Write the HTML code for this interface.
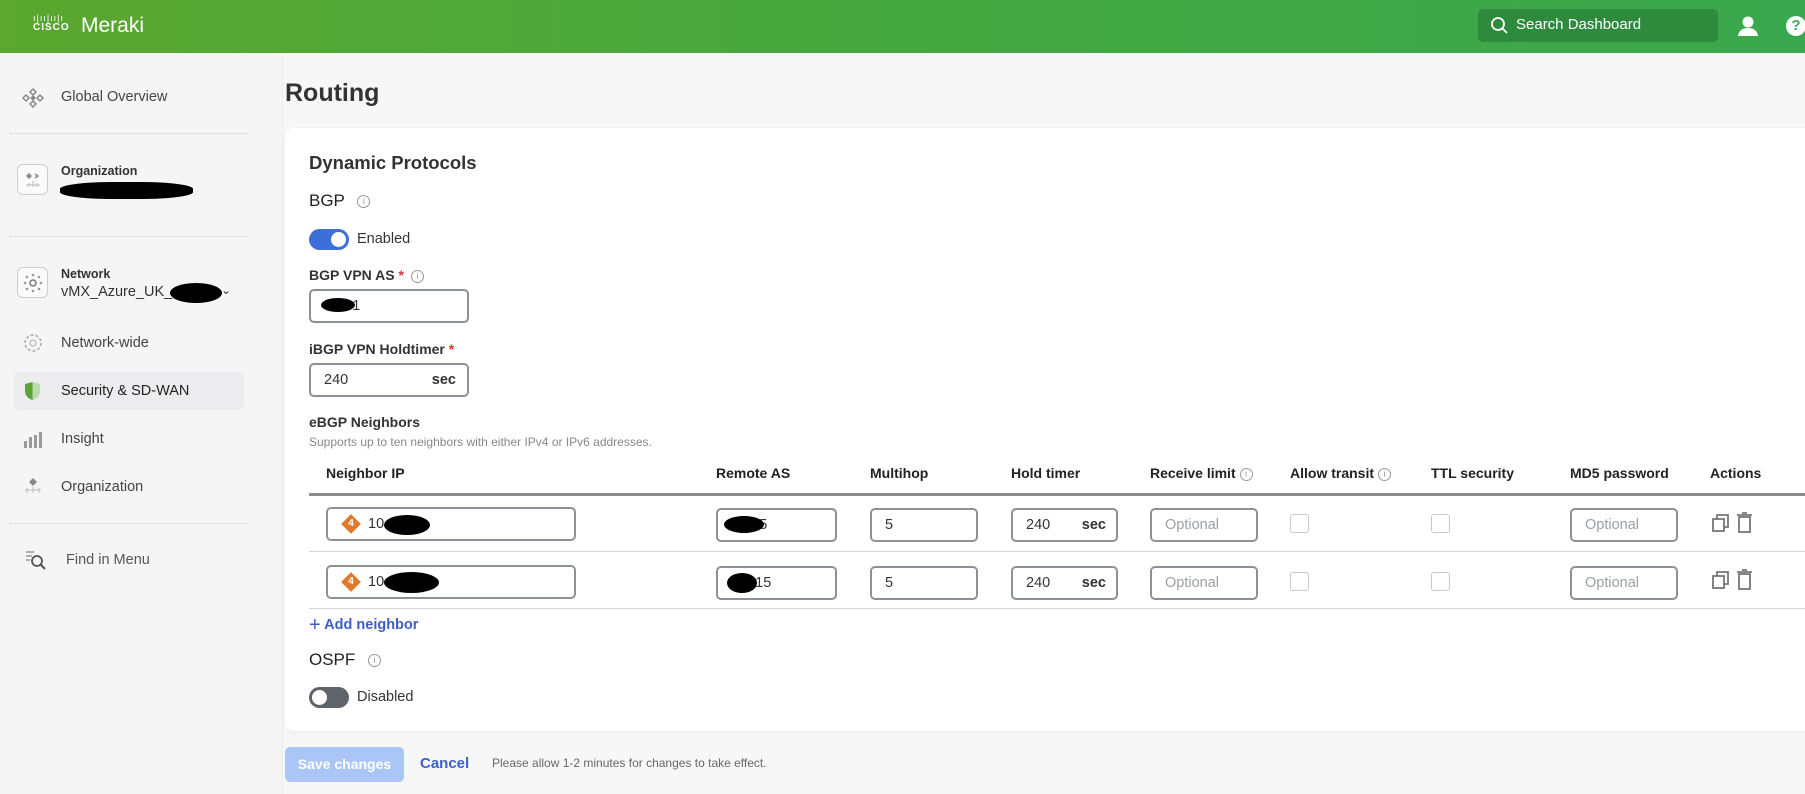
<!DOCTYPE html>
<html><head><meta charset="utf-8"><style>
*{box-sizing:border-box;margin:0;padding:0}
body{width:1805px;height:794px;overflow:hidden;background:#f7f7f7;font-family:"Liberation Sans",sans-serif;color:#222;position:relative}
.a{position:absolute;white-space:nowrap}
.hdr{position:absolute;left:0;top:0;width:1805px;height:53px;background:linear-gradient(90deg,#5ba72f,#45a840 50%,#3aa84e)}
.inp{position:absolute;height:34px;border:2px solid #8d9196;border-radius:5px;background:#fff;font-size:14.5px;color:#333;padding:0 13px;line-height:30px}
.ph{color:#9aa0a6}
.th{position:absolute;top:465px;font-size:14px;font-weight:bold;color:#222}
.cb{position:absolute;width:19px;height:19px;border:1.5px solid #c5c8cc;border-radius:3px;background:#fff}
.blob{position:absolute;background:#000;border-radius:50%}
.side{font-size:14.5px;color:#444}
.info{display:inline-block;width:13px;height:13px;border:1px solid #999;border-radius:50%;font-size:9px;line-height:11px;text-align:center;color:#999;font-weight:normal;vertical-align:middle}
.dia{display:inline-block;position:relative;width:14px;height:14px;background:#e07b2e;transform:rotate(45deg);vertical-align:middle;margin:0 10px 0 3px}
.dia b{position:absolute;left:0;top:0;width:14px;height:14px;transform:rotate(-45deg);color:#fff;font-size:10px;line-height:14px;text-align:center}
</style></head><body>
<div class="hdr"></div>
<div class="a" style="left:33px;top:14px;color:#fff;font-size:9px;letter-spacing:1px;line-height:9px">ı|ıı|ıı|ı<br><b style="font-size:10px">CISCO</b></div>
<div class="a" style="left:81px;top:14px;color:#fff;font-size:21px;font-weight:300">Meraki</div>
<div class="a" style="left:1478px;top:9px;width:240px;height:33px;background:#2e8b3e;border-radius:5px"></div>
<svg class="a" style="left:1490px;top:16px" width="20" height="20" viewBox="0 0 20 20"><circle cx="8" cy="8" r="6" fill="none" stroke="#fff" stroke-width="1.8"/><path d="M12.5 12.5L17 17" stroke="#fff" stroke-width="1.8"/></svg>
<div class="a" style="left:1516px;top:16px;color:#fff;font-size:15px">Search Dashboard</div>
<svg class="a" style="left:1737px;top:15px" width="22" height="22" viewBox="0 0 22 22"><circle cx="11" cy="7" r="5.5" fill="#fff"/><path d="M1 21c1-6 5-8 10-8s9 2 10 8z" fill="#fff"/></svg>
<div class="a" style="left:1786px;top:16px;width:20px;height:20px;background:#fff;border-radius:50%;color:#3aa84e;font-weight:bold;font-size:15px;text-align:center;line-height:20px">?</div>

<div class="a" style="left:0;top:53px;width:283px;height:741px;background:#f5f5f5;border-right:1px solid #ececec"></div>
<svg class="a" style="left:22px;top:87px" width="22" height="22" viewBox="0 0 22 22" fill="#888"><path d="M11 2l3 3-3 3-3-3z M4 8l3 3-3 3-3-3z M18 8l3 3-3 3-3-3z M11 14l3 3-3 3-3-3z" fill="none" stroke="#888" stroke-width="1.5"/><rect x="9" y="9" width="4" height="4" transform="rotate(45 11 11)"/></svg>
<div class="a side" style="left:61px;top:89px">Global Overview</div>
<div class="a" style="left:9px;top:133px;width:240px;height:1px;background:#ddd"></div>
<div class="a" style="left:17px;top:164px;width:31px;height:31px;border:1.5px solid #ccc;border-radius:6px;background:#fafafa"></div>
<svg class="a" style="left:23px;top:170px" width="20" height="20" viewBox="0 0 20 20"><path d="M6 3l3 3-3 3-3-3z" fill="#888"/><path d="M12 4l3 2-3 2" fill="none" stroke="#888" stroke-width="1.5"/><path d="M3 15h14M6 13v4M10 11v6M14 13v4" stroke="#bbb" stroke-width="1"/></svg>
<div class="a" style="left:61px;top:164px;font-size:12.5px;font-weight:bold;color:#333">Organization</div>
<div class="blob" style="left:60px;top:182px;width:133px;height:17px;border-radius:40%"></div>
<div class="a" style="left:9px;top:236px;width:240px;height:1px;background:#ddd"></div>
<div class="a" style="left:17px;top:267px;width:31px;height:31px;border:1.5px solid #ccc;border-radius:6px;background:#fafafa"></div>
<svg class="a" style="left:22px;top:272px" width="22" height="22" viewBox="0 0 22 22"><circle cx="11" cy="11" r="3" fill="none" stroke="#777" stroke-width="1.5"/><g fill="#999"><circle cx="11" cy="3" r="1.3"/><circle cx="11" cy="19" r="1.3"/><circle cx="3" cy="11" r="1.3"/><circle cx="19" cy="11" r="1.3"/><circle cx="5" cy="5" r="1.3"/><circle cx="17" cy="5" r="1.3"/><circle cx="5" cy="17" r="1.3"/><circle cx="17" cy="17" r="1.3"/></g></svg>
<div class="a" style="left:61px;top:267px;font-size:12.5px;font-weight:bold;color:#333">Network</div>
<div class="a" style="left:61px;top:284px;font-size:14.5px;color:#333">vMX_Azure_UK_</div>
<div class="blob" style="left:170px;top:283px;width:52px;height:20px"></div>
<div class="a" style="left:221px;top:283px;font-size:12px;color:#333">⌄</div>
<svg class="a" style="left:21px;top:331px" width="24" height="24" viewBox="0 0 24 24"><circle cx="12" cy="12" r="8" fill="none" stroke="#aaa" stroke-width="1.5" stroke-dasharray="3 2"/><circle cx="12" cy="12" r="3" fill="none" stroke="#aaa"/></svg>
<div class="a side" style="left:61px;top:335px">Network-wide</div>
<div class="a" style="left:14px;top:372px;width:230px;height:38px;background:#ececee;border-radius:6px"></div>
<svg class="a" style="left:24px;top:381px" width="17" height="20" viewBox="0 0 17 20"><path d="M8.5 1L1 3v7c0 5 4 8 7.5 9z" fill="#5ca33b"/><path d="M8.5 1L16 3v7c0 5-4 8-7.5 9z" fill="#b8dca8"/></svg>
<div class="a" style="left:61px;top:383px;font-size:14.5px;color:#222">Security &amp; SD-WAN</div>
<svg class="a" style="left:24px;top:432px" width="20" height="16" viewBox="0 0 20 16" fill="#999"><rect x="0" y="9" width="3" height="7"/><rect x="5" y="5" width="3" height="11"/><rect x="10" y="3" width="3" height="13"/><rect x="15" y="0" width="3" height="16"/></svg>
<div class="a side" style="left:61px;top:431px">Insight</div>
<svg class="a" style="left:23px;top:477px" width="20" height="18" viewBox="0 0 20 18"><path d="M10 1l4 4-4 4-4-4z" fill="#888"/><path d="M2 13h16M4 11v5M10 10v6M16 11v5" stroke="#bbb"/></svg>
<div class="a side" style="left:61px;top:479px">Organization</div>
<div class="a" style="left:9px;top:523px;width:240px;height:1px;background:#ddd"></div>
<svg class="a" style="left:25px;top:549px" width="22" height="22" viewBox="0 0 22 22"><path d="M1 3h8M1 7h6M1 11h4" stroke="#999" stroke-width="1.5"/><circle cx="12" cy="12" r="5" fill="none" stroke="#555" stroke-width="1.8"/><path d="M15.5 15.5L20 20" stroke="#555" stroke-width="2"/></svg>
<div class="a side" style="left:66px;top:552px;color:#555">Find in Menu</div>

<div class="a" style="left:285px;top:79px;font-size:25px;font-weight:bold;color:#333">Routing</div>
<div class="a" style="left:285px;top:128px;width:1530px;height:603px;background:#fff;border-radius:9px;box-shadow:0 1px 3px rgba(0,0,0,.06)"></div>
<div class="a" style="left:309px;top:152px;font-size:18.5px;font-weight:bold;color:#333">Dynamic Protocols</div>
<div class="a" style="left:309px;top:191px;font-size:17px;color:#222">BGP <span class="info" style="margin-left:8px">i</span></div>
<div class="a" style="left:309px;top:229px;width:40px;height:21px;background:#3c6fd8;border-radius:11px"></div>
<div class="a" style="left:331px;top:232px;width:15px;height:15px;background:#fff;border-radius:50%"></div>
<div class="a" style="left:357px;top:231px;font-size:14.5px;color:#333">Enabled</div>
<div class="a" style="left:309px;top:267px;font-size:14px;font-weight:bold;color:#333">BGP VPN AS<span style="color:#d33"> *</span> <span class="info" style="margin-left:3px">i</span></div>
<div class="inp" style="left:309px;top:289px;width:160px;height:34px">&nbsp;&nbsp;&nbsp;&nbsp;&nbsp;&nbsp;&nbsp;1</div>
<div class="blob" style="left:321px;top:298px;width:34px;height:14px"></div>
<div class="a" style="left:309px;top:341px;font-size:14px;font-weight:bold;color:#333">iBGP VPN Holdtimer<span style="color:#d33"> *</span></div>
<div class="inp" style="left:309px;top:363px;width:160px;height:34px">240<span style="position:absolute;right:11px;font-weight:bold">sec</span></div>
<div class="a" style="left:309px;top:414px;font-size:14px;font-weight:bold;color:#333">eBGP Neighbors</div>
<div class="a" style="left:309px;top:435px;font-size:12px;color:#888">Supports up to ten neighbors with either IPv4 or IPv6 addresses.</div>

<div class="th" style="left:326px">Neighbor IP</div>
<div class="th" style="left:716px">Remote AS</div>
<div class="th" style="left:870px">Multihop</div>
<div class="th" style="left:1011px">Hold timer</div>
<div class="th" style="left:1150px">Receive limit <span class="info">i</span></div>
<div class="th" style="left:1290px">Allow transit <span class="info">i</span></div>
<div class="th" style="left:1431px">TTL security</div>
<div class="th" style="left:1570px">MD5 password</div>
<div class="th" style="left:1710px">Actions</div>
<div class="a" style="left:309px;top:493px;width:1496px;height:3px;background:#8a8d91"></div>
<div class="a" style="left:309px;top:551px;width:1496px;height:1px;background:#d6d6d6"></div>
<div class="a" style="left:309px;top:608px;width:1496px;height:1px;background:#d6d6d6"></div>

<div class="inp" style="left:326px;top:507px;width:250px"><span class="dia"><b>4</b></span>10.</div>
<div class="blob" style="left:384px;top:515px;width:46px;height:20px"></div>
<div class="inp" style="left:716px;top:508px;width:121px">&nbsp;&nbsp;&nbsp;&nbsp;&nbsp;&nbsp;&nbsp;5</div>
<div class="blob" style="left:724px;top:516px;width:40px;height:17px"></div>
<div class="inp" style="left:870px;top:508px;width:108px">5</div>
<div class="inp" style="left:1011px;top:508px;width:107px">240<span style="position:absolute;right:10px;font-weight:bold">sec</span></div>
<div class="inp ph" style="left:1150px;top:508px;width:108px">Optional</div>
<div class="cb" style="left:1290px;top:514px"></div>
<div class="cb" style="left:1431px;top:514px"></div>
<div class="inp ph" style="left:1570px;top:508px;width:108px">Optional</div>

<div class="inp" style="left:326px;top:565px;width:250px"><span class="dia"><b>4</b></span>10.</div>
<div class="blob" style="left:384px;top:572px;width:55px;height:21px"></div>
<div class="inp" style="left:716px;top:566px;width:121px">&nbsp;&nbsp;&nbsp;&nbsp;&nbsp;&nbsp;15</div>
<div class="blob" style="left:727px;top:573px;width:30px;height:20px"></div>
<div class="inp" style="left:870px;top:566px;width:108px">5</div>
<div class="inp" style="left:1011px;top:566px;width:107px">240<span style="position:absolute;right:10px;font-weight:bold">sec</span></div>
<div class="inp ph" style="left:1150px;top:566px;width:108px">Optional</div>
<div class="cb" style="left:1290px;top:572px"></div>
<div class="cb" style="left:1431px;top:572px"></div>
<div class="inp ph" style="left:1570px;top:566px;width:108px">Optional</div>

<svg class="a" style="left:1711px;top:511px" width="46" height="24" viewBox="0 0 46 24"><g fill="none" stroke="#777" stroke-width="1.8"><rect x="2" y="8" width="11" height="12"/><path d="M6 8V4h11v12h-4"/><rect x="28" y="6" width="11" height="15"/><path d="M26 4h15M31 2h5"/></g></svg>
<svg class="a" style="left:1711px;top:568px" width="46" height="24" viewBox="0 0 46 24"><g fill="none" stroke="#777" stroke-width="1.8"><rect x="2" y="8" width="11" height="12"/><path d="M6 8V4h11v12h-4"/><rect x="28" y="6" width="11" height="15"/><path d="M26 4h15M31 2h5"/></g></svg>

<div class="a" style="left:309px;top:614px;font-size:14.5px;font-weight:bold;color:#3d5fc2"><span style="font-size:20px;font-weight:normal;vertical-align:-2px">+</span> Add neighbor</div>
<div class="a" style="left:309px;top:650px;font-size:17px;color:#222">OSPF <span class="info" style="margin-left:8px">i</span></div>
<div class="a" style="left:309px;top:687px;width:40px;height:21px;background:#5f636a;border-radius:11px"></div>
<div class="a" style="left:312px;top:690px;width:15px;height:15px;background:#fff;border-radius:50%"></div>
<div class="a" style="left:357px;top:689px;font-size:14.5px;color:#333">Disabled</div>

<div class="a" style="left:285px;top:747px;width:119px;height:35px;background:#a9c6f7;border-radius:5px;color:#fff;font-size:14px;font-weight:bold;text-align:center;line-height:35px">Save changes</div>
<div class="a" style="left:420px;top:755px;font-size:15px;font-weight:bold;color:#3d5fc2">Cancel</div>
<div class="a" style="left:492px;top:756px;font-size:12px;color:#666">Please allow 1-2 minutes for changes to take effect.</div>
</body></html>
